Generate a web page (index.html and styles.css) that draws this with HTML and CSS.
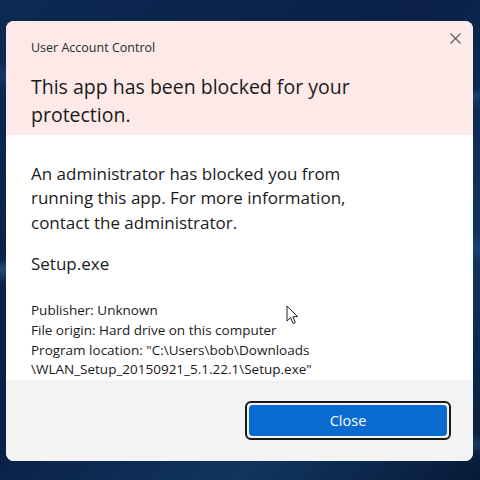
FILE: index.html
```html
<!DOCTYPE html>
<html lang="en">
<head>
<meta charset="utf-8">
<title>User Account Control</title>
<link rel="stylesheet" href="styles.css">
</head>
<body>
<div class="desktop">
  <div class="dialog">
    <div class="header">
      <div class="caption">User Account Control</div>
      <h1 class="title">This app has been blocked for your protection.</h1>
      <button class="x-btn" aria-label="Close">
        <svg width="11" height="11" viewBox="0 0 11 11"><path d="M0.5 0.5L10.5 10.5M10.5 0.5L0.5 10.5" stroke="#5a5a5a" stroke-width="1.1" fill="none"/></svg>
      </button>
    </div>
    <div class="content">
      <p class="message">An administrator has blocked you from running this app. For more information, contact the administrator.</p>
      <p class="app-name">Setup.exe</p>
      <div class="details">
        <div>Publisher: Unknown</div>
        <div>File origin: Hard drive on this computer</div>
        <div>Program location: "C:\Users\bob\Downloads</div>
        <div>\WLAN_Setup_20150921_5.1.22.1\Setup.exe"</div>
      </div>
    </div>
    <div class="footer">
      <div class="focus-ring"><button class="primary">Close</button></div>
    </div>
    <svg class="cursor" width="13" height="21" viewBox="0 0 13 21"><path d="M1 1L1 16L4.6 12.6L7.2 18.6L9.4 17.6L6.9 11.8L11.6 11.6Z" fill="#fff" stroke="#222" stroke-width="1" stroke-linejoin="round"/></svg>
  </div>
</div>
</body>
</html>
```
FILE: styles.css
```css
html, body {
  margin: 0;
  padding: 0;
}
body {
  width: 480px;
  height: 480px;
  overflow: hidden;
  font-family: "Open Sans", "Noto Sans", sans-serif;
  color: #1a1a1a;
}
.desktop {
  width: 480px;
  height: 480px;
  padding: 21px 7px 0 6px;
  box-sizing: border-box;
  background:
    linear-gradient(160deg, transparent 0 40%, rgba(60,110,170,0.3) 41%, transparent 43% 100%),
    linear-gradient(20deg, transparent 0 30%, rgba(70,120,180,0.25) 32%, transparent 34% 60%, rgba(70,120,180,0.2) 62%, transparent 64%),
    linear-gradient(135deg, #0c2a53 0%, #0a2046 45%, #10355f 75%, #081a38 100%);
}
.dialog {
  position: relative;
  width: 467px;
  height: 440px;
  border-radius: 8px;
  overflow: hidden;
  display: flex;
  flex-direction: column;
  background: #ffffff;
}
.header {
  position: relative;
  background: #fde9e8;
  height: 117px;
  padding: 19px 24px 0 25px;
  box-sizing: border-box;
}
.caption {
  font-size: 12.5px;
  line-height: 16px;
  color: #2a2a2a;
}
.title {
  margin: 17px 0 0;
  font-size: 19.5px;
  line-height: 28px;
  font-weight: 400;
  width: 340px;
}
.x-btn {
  position: absolute;
  top: 12px;
  right: 12px;
  border: 0;
  background: transparent;
  padding: 0;
  width: 11px;
  height: 11px;
  display: flex;
}
.content {
  flex: 1;
  padding: 27px 24px 0 25px;
  background: #ffffff;
}
.message {
  margin: 0;
  font-size: 17px;
  line-height: 24.5px;
  width: 330px;
}
.app-name {
  margin: 17px 0 0;
  font-size: 17px;
  line-height: 24px;
}
.details {
  margin-top: 25px;
  font-size: 13.5px;
  line-height: 19.7px;
}
.footer {
  height: 83px;
  background: #f3f3f3;
  display: flex;
  justify-content: flex-end;
  align-items: flex-start;
  padding: 21px 22px 0 0;
  box-sizing: border-box;
}
.focus-ring {
  border: 2px solid #1a1a1a;
  border-radius: 6px;
  padding: 2px;
  display: flex;
}
.primary {
  width: 198px;
  height: 31px;
  border: 0;
  border-radius: 4px;
  background: #0a6bd0;
  color: #ffffff;
  font-family: "Open Sans", "Noto Sans", sans-serif;
  font-size: 14.5px;
  padding: 0;
}
.cursor {
  position: absolute;
  left: 280px;
  top: 284px;
}
```
